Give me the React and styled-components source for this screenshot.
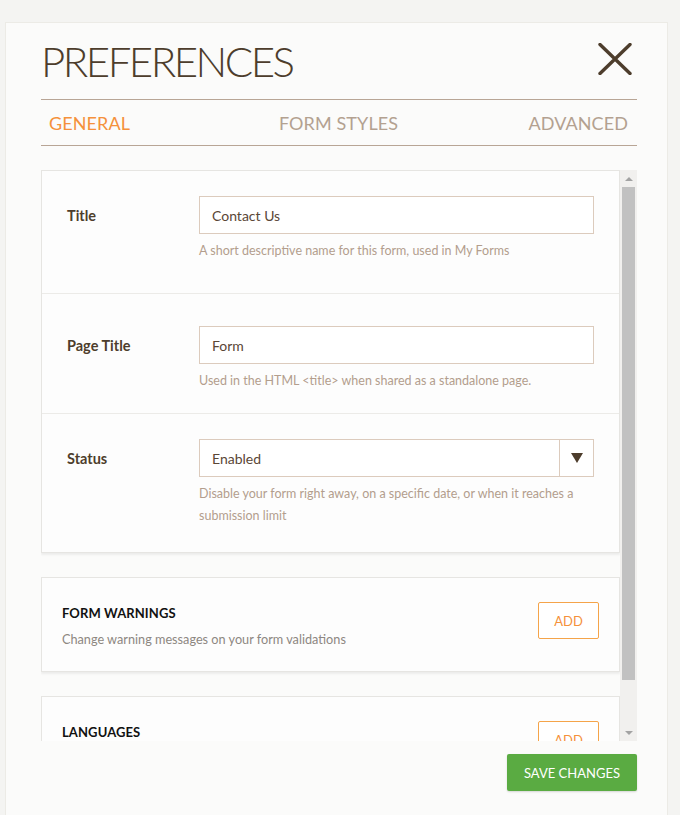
import React from 'react'
import styled, { createGlobalStyle } from 'styled-components'

const GlobalStyle = createGlobalStyle`
  html, body {
    margin: 0;
    padding: 0;
    background: #f4f4f2;
    font-family: Lato, "Open Sans", sans-serif;
  }
  * { box-sizing: border-box; }
`

const Page = styled.div`
  padding: 22px 12px 0 5px;
  height: 815px;
  overflow: hidden;
`

const Panel = styled.div`
  background: #fbfbfa;
  border: 1px solid #ecebe6;
  border-bottom: none;
  height: 793px;
  padding: 15px 30px 0 35px;
`

const Header = styled.div`
  display: flex;
  align-items: flex-start;
  justify-content: space-between;
  height: 62px;
  border-bottom: 1px solid #b8a595;
`

const Heading = styled.h1`
  margin: 0;
  font-weight: 300;
  font-size: 42px;
  line-height: 44px;
  letter-spacing: -2.5px;
  color: #4d3d2c;
  padding-top: 1px;
`

const CloseButton = styled.button`
  border: none;
  background: none;
  padding: 0;
  margin: 5px 5px 0 0;
  cursor: pointer;
  display: flex;
`

const Tabs = styled.div`
  display: grid;
  grid-template-columns: 1fr auto 1fr;
  align-items: center;
  height: 46px;
  padding: 0 9px 0 8px;
  border-bottom: 1px solid #b8a595;
`

const Tab = styled.span`
  font-size: 18px;
  color: ${p => (p.$active ? '#f5913b' : '#b3a190')};
  letter-spacing: 0.1px;
  justify-self: ${p => p.$align || 'center'};
`

const ScrollFrame = styled.div`
  display: flex;
  margin-top: 24px;
  height: 571px;
`

const Viewport = styled.div`
  flex: 1;
  overflow: hidden;
  display: flex;
  flex-direction: column;
  gap: 24px;
`

const Card = styled.div`
  background: #fdfdfd;
  border: 1px solid #e6e5e2;
  box-shadow: 0 2px 2px rgba(0, 0, 0, 0.06);
  flex-shrink: 0;
`

const FieldRow = styled.div`
  display: grid;
  grid-template-columns: 132px 1fr;
  padding: ${p => p.$pad};
  padding-left: 25px;
  padding-right: 25px;
  border-top: ${p => (p.$first ? 'none' : '1px solid #ecebe8')};
`

const Label = styled.label`
  font-weight: 700;
  font-size: 14.5px;
  color: #4d3d2c;
  height: 38px;
  display: flex;
  align-items: center;
`

const Input = styled.div`
  height: 38px;
  border: 1px solid #dccbbd;
  background: #fff;
  display: flex;
  align-items: center;
  padding-left: 12px;
  font-size: 14px;
  color: #5a4636;
`

const SelectBox = styled(Input)`
  padding-left: 0;
`

const SelectValue = styled.span`
  flex: 1;
  padding-left: 12px;
`

const SelectArrow = styled.span`
  width: 34px;
  height: 100%;
  border-left: 1px solid #dccbbd;
  display: flex;
  align-items: center;
  justify-content: center;
`

const Help = styled.p`
  margin: 6px 0 0;
  font-size: 12.5px;
  line-height: 22px;
  color: #b39e8d;
`

const SectionCard = styled(Card)`
  display: flex;
  align-items: flex-start;
  justify-content: space-between;
  padding: 24px 20px 0 20px;
  height: 95px;
`

const SectionText = styled.div`
  padding-top: 3px;
`

const SectionTitle = styled.div`
  font-weight: 700;
  font-size: 13px;
  color: #111;
  letter-spacing: 0.1px;
`

const SectionDesc = styled.div`
  margin-top: 10px;
  font-size: 12.7px;
  color: #8d8781;
`

const AddButton = styled.button`
  width: 61px;
  height: 37px;
  border: 1px solid #f5a44a;
  border-radius: 2px;
  background: #fff;
  color: #f5913b;
  font-family: inherit;
  font-size: 13px;
  cursor: pointer;
`

const ScrollBar = styled.div`
  width: 17px;
  background: #f1f0ee;
  display: flex;
  flex-direction: column;
  align-items: center;
`

const ScrollArrow = styled.div`
  height: 17px;
  display: flex;
  align-items: center;
  justify-content: center;
  font-size: 0;
`

const ScrollTrack = styled.div`
  flex: 1;
  width: 100%;
  display: flex;
  justify-content: center;
`

const ScrollThumb = styled.div`
  width: 13px;
  height: 493px;
  background: #c1c1c1;
`

const Footer = styled.div`
  display: flex;
  justify-content: flex-end;
  padding-top: 13px;
`

const SaveButton = styled.button`
  width: 130px;
  height: 37px;
  border: none;
  border-radius: 2px;
  background: #5aab42;
  color: #fff;
  font-family: inherit;
  font-size: 13px;
  box-shadow: 0 1px 2px rgba(0, 0, 0, 0.15);
  cursor: pointer;
`

const Triangle = ({ up, color = '#a3a3a3', w = 8, h = 4 }) => (
  <svg width={w} height={h} viewBox={`0 0 ${w} ${h}`}>
    <polygon
      points={up ? `0,${h} ${w},${h} ${w / 2},0` : `0,0 ${w},0 ${w / 2},${h}`}
      fill={color}
    />
  </svg>
)

const fields = [
  { label: 'Title', value: 'Contact Us', help: 'A short descriptive name for this form, used in My Forms', pad: '25px 0 31px' },
  { label: 'Page Title', value: 'Form', help: 'Used in the HTML <title> when shared as a standalone page.', pad: '32px 0 21px' },
  {
    label: 'Status',
    value: 'Enabled',
    select: true,
    help: 'Disable your form right away, on a specific date, or when it reaches a submission limit',
    pad: '25px 0 25px',
  },
]

const sections = [
  { title: 'FORM WARNINGS', desc: 'Change warning messages on your form validations' },
  { title: 'LANGUAGES' },
]

const App = () => {
  return (
    <>
      <GlobalStyle />
      <Page>
        <Panel>
          <Header>
            <Heading>PREFERENCES</Heading>
            <CloseButton aria-label="Close">
              <svg width="34" height="32" viewBox="0 0 34 32">
                <path d="M2 1.5 L32 30.5 M32 1.5 L2 30.5" stroke="#4d3d2c" strokeWidth="3.4" strokeLinecap="round" />
              </svg>
            </CloseButton>
          </Header>
          <Tabs>
            <Tab $active $align="start">GENERAL</Tab>
            <Tab>FORM STYLES</Tab>
            <Tab $align="end">ADVANCED</Tab>
          </Tabs>

          <ScrollFrame>
            <Viewport>
              <Card>
                {fields.map((f, i) => (
                  <FieldRow key={f.label} $first={i === 0} $pad={f.pad}>
                    <Label>{f.label}</Label>
                    <div>
                      {f.select ? (
                        <SelectBox>
                          <SelectValue>{f.value}</SelectValue>
                          <SelectArrow>
                            <Triangle color="#4d3d2c" w={12} h={10} />
                          </SelectArrow>
                        </SelectBox>
                      ) : (
                        <Input>{f.value}</Input>
                      )}
                      <Help>{f.help}</Help>
                    </div>
                  </FieldRow>
                ))}
              </Card>

              {sections.map(s => (
                <SectionCard key={s.title}>
                  <SectionText>
                    <SectionTitle>{s.title}</SectionTitle>
                    {s.desc && <SectionDesc>{s.desc}</SectionDesc>}
                  </SectionText>
                  <AddButton>ADD</AddButton>
                </SectionCard>
              ))}
            </Viewport>
            <ScrollBar>
              <ScrollArrow>
                <Triangle up />
              </ScrollArrow>
              <ScrollTrack>
                <ScrollThumb />
              </ScrollTrack>
              <ScrollArrow>
                <Triangle />
              </ScrollArrow>
            </ScrollBar>
          </ScrollFrame>

          <Footer>
            <SaveButton>SAVE CHANGES</SaveButton>
          </Footer>
        </Panel>
      </Page>
    </>
  )
}

export default App
